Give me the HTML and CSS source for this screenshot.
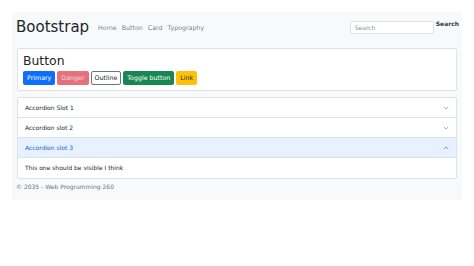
FILE: index.html
```html
<!DOCTYPE html>
<html lang="en">
<head>
<meta charset="utf-8">
<title>Bootstrap</title>
<link rel="stylesheet" href="styles.css">
</head>
<body>
<div class="page">
  <nav class="navbar">
    <a class="brand" href="#">Bootstrap</a>
    <ul class="nav">
      <li><a href="#">Home</a></li>
      <li><a href="#">Button</a></li>
      <li><a href="#">Card</a></li>
      <li><a href="#">Typography</a></li>
    </ul>
    <form class="search">
      <input type="text" placeholder="Search">
      <button type="button">Search</button>
    </form>
  </nav>

  <div class="main">
    <div class="card">
      <h2>Button</h2>
      <div class="btns">
        <span class="btn primary">Primary</span>
        <span class="btn danger">Danger</span>
        <span class="btn outline">Outline</span>
        <span class="btn success">Toggle button</span>
        <span class="btn warning">Link</span>
      </div>
    </div>

    <div class="accordion">
      <div class="acc-head">Accordion Slot 1
        <svg viewBox="0 0 16 16"><path d="M2 5l6 6 6-6"/></svg>
      </div>
      <div class="acc-head">Accordion slot 2
        <svg viewBox="0 0 16 16"><path d="M2 5l6 6 6-6"/></svg>
      </div>
      <div class="acc-head open">Accordion slot 3
        <svg viewBox="0 0 16 16"><path d="M2 11l6-6 6 6"/></svg>
      </div>
      <div class="acc-body">This one should be visible I think</div>
    </div>
  </div>

  <footer class="footer">&copy; 2035 - Web Programming 260</footer>
</div>
</body>
</html>
```

FILE: styles.css
```css
*{
	margin:0;
	padding:0;
	box-sizing:border-box;
	}
body{
	font-family:"DejaVu Sans", sans-serif;
	font-size:6px;
	color:#212529;
	background:#fff;
	}
li{
	list-style:none;
	}
a{
	text-decoration:none;
	}
.page{
	width:450px;
	margin:12px;
	background:#f8f9fa;
	padding-bottom:10px;
	}
.navbar{
	height:30px;
	display:flex;
	align-items:center;
	padding:0 4px;
	}
.brand{
	font-size:15px;
	color:#212529;
	margin-right:9px;
	}
.nav{
	display:flex;
	gap:5px;
	font-size:6.3px;
	}
.nav a{
	color:rgba(0,0,0,.55);
	}
.search{
	margin-left:auto;
	display:flex;
	align-items:flex-start;
	height:14px;
	}
.search input{
	width:84px;
	height:13px;
	border:1px solid #dee2e6;
	border-radius:2px;
	font:inherit;
	padding:0 4px;
	margin-top:1px;
	}
.search input::placeholder{
	color:#8a9096;
	}
.search button{
	border:0;
	background:none;
	font:inherit;
	font-weight:bold;
	color:#343a40;
	margin-left:2px;
	margin-right:-1px;
	}
.main{
	padding:6px 5px 0;
	}
.card{
	background:#fff;
	border:1px solid #dee2e6;
	border-radius:2px;
	height:43px;
	padding:4px 5px;
	}
.card h2{
	font-size:12.4px;
	font-weight:normal;
	line-height:16px;
	}
.btns{
	display:flex;
	gap:2px;
	margin-top:2px;
	font-size:6.3px;
	}
.btn{
	height:14px;
	line-height:12px;
	padding:0 3px;
	border:1px solid transparent;
	border-radius:2px;
	color:#fff;
	}
.primary{ background:#0d6efd; }
.danger{ background:#e4727d; color:#f6d6d9; }
.outline{ background:#fff; border-color:#6c757d; color:#212529; }
.success{ background:#198754; }
.warning{ background:#ffc107; color:#212529; }
.accordion{
	margin-top:6px;
	background:#fff;
	border:1px solid #dee2e6;
	border-radius:2px;
	}
.acc-head{
	height:20px;
	display:flex;
	align-items:center;
	justify-content:space-between;
	padding:0 7px;
	border-bottom:1px solid #dee2e6;
	}
.acc-head svg{
	width:6px;
	height:6px;
	fill:none;
	stroke:#6c757d;
	stroke-width:1.6;
	}
.acc-head.open{
	background:#e7f1ff;
	color:#0c63e4;
	}
.acc-head.open svg{
	stroke:#0c63e4;
	}
.acc-body{
	height:20px;
	line-height:20px;
	padding:0 7px;
	}
.footer{
	padding:4px 4px 0;
	color:#6c757d;
	}
```
